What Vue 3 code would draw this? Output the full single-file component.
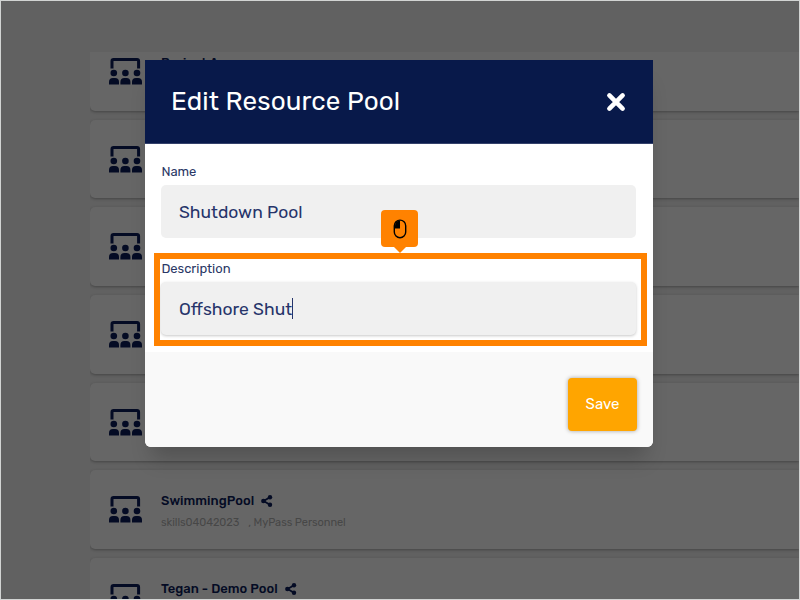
<script setup>
const pools = [
  { name: 'Project A', meta: [] },
  { name: '', meta: [] },
  { name: '', meta: [] },
  { name: '', meta: [] },
  { name: '', meta: [] },
  { name: 'SwimmingPool', shared: true, meta: ['skills04042023', ', MyPass Personnel'] },
  { name: 'Tegan - Demo Pool', shared: true, meta: [] },
]
</script>

<template>
  <div class="screen">
    <div class="list">
      <div v-for="(p, i) in pools" :key="i" class="card">
        <svg class="people" viewBox="0 0 33 27" width="33" height="27">
          <path d="M3 10.5V3.2Q3 1.6 4.6 1.6H28Q29.6 1.6 29.6 3.2V10.5" fill="none" stroke="currentColor" stroke-width="3" />
          <g fill="currentColor">
            <circle cx="4.8" cy="15" r="3.3" />
            <circle cx="16.4" cy="15" r="3.3" />
            <circle cx="28" cy="15" r="3.3" />
            <path d="M0 26.5V24Q0 20 4 20H6Q10 20 10 24V26.5ZM11.4 26.5V24Q11.4 20 15.4 20H17.4Q21.4 20 21.4 24V26.5ZM23 26.5V24Q23 20 27 20H29Q33 20 33 24V26.5Z" />
          </g>
        </svg>
        <div class="info">
          <div class="title">
            <span>{{ p.name }}</span>
            <svg v-if="p.shared" class="share" viewBox="0 0 12 12" width="12" height="12">
              <path d="M9 2.3L2.6 6L9 9.7" fill="none" stroke="currentColor" stroke-width="1.8" />
              <circle cx="9" cy="2.3" r="2.2" fill="currentColor" />
              <circle cx="2.4" cy="6" r="2.3" fill="currentColor" />
              <circle cx="9" cy="9.7" r="2.2" fill="currentColor" />
            </svg>
          </div>
          <div v-if="p.meta.length" class="meta">
            <span v-for="m in p.meta" :key="m">{{ m }}</span>
          </div>
        </div>
      </div>
    </div>

    <div class="modal">
      <header class="head">
        <h1>Edit Resource Pool</h1>
        <svg class="close" viewBox="0 0 20 20" width="20" height="20">
          <path d="M3.4 3.4L16.6 16.6M16.6 3.4L3.4 16.6" stroke="#fff" stroke-width="4.6" stroke-linecap="round" />
        </svg>
      </header>
      <div class="body">
        <label class="label">Name</label>
        <div class="field"><span>Shutdown Pool</span></div>
        <div class="second">
          <label class="label">Description</label>
          <div class="field focused"><span>Offshore Shut</span><i class="caret"></i></div>
          <div class="highlight">
            <div class="tip">
              <svg viewBox="0 0 14 20" width="14" height="20">
                <path d="M2 9.5V6.5Q2 2 7 1.5V9.5Z" fill="#000" />
                <rect x="1.3" y="1.1" width="11.4" height="17.6" rx="5.7" fill="none" stroke="#000" stroke-width="1.4" />
              </svg>
            </div>
          </div>
        </div>
      </div>
      <footer class="foot">
        <button class="save"><span>Save</span></button>
      </footer>
    </div>
  </div>
</template>

<style>
body {
  margin: 0;
}
</style>

<style scoped>
.screen {
  position: relative;
  box-sizing: border-box;
  width: 800px;
  height: 600px;
  overflow: hidden;
  border: 1px solid #d2d4d3;
  background: #616161;
  padding: 51px 0 0 89px;
  font-family: Rubik, Roboto, sans-serif;
}
.list {
  height: 547px;
  overflow: hidden;
}
.card {
  display: flex;
  box-sizing: border-box;
  height: 78.6px;
  margin-bottom: 9px;
  padding: 26px 0 0 19px;
  border-radius: 5px 0 0 5px;
  background: #666;
  box-shadow: 0 1px 3px rgba(0, 0, 0, 0.3);
  color: #040b24;
}
.card:first-child {
  margin-top: -19.8px;
}
.people {
  flex: none;
}
.info {
  margin-left: 19px;
}
.title {
  display: flex;
  align-items: center;
  height: 16px;
  margin-top: -2.9px;
  font-size: 13px;
  font-weight: 500;
  line-height: 16px;
  letter-spacing: 0.03px;
  white-space: nowrap;
}
.share {
  margin-left: 7px;
}
.meta {
  display: flex;
  gap: 9px;
  margin-top: 7px;
  font-size: 11px;
  line-height: 14px;
  letter-spacing: -0.06px;
  color: #474747;
}
.modal {
  position: absolute;
  left: 144px;
  top: 59px;
  width: 508px;
  height: 387px;
  display: flex;
  flex-direction: column;
  border-radius: 0 0 6px 6px;
  background: #fff;
  box-shadow: 0 18px 20px -7px rgba(0, 0, 0, 0.2);
}
.head {
  display: flex;
  align-items: center;
  justify-content: space-between;
  box-sizing: border-box;
  height: 84px;
  padding: 0 27px 0 26px;
  border-bottom: 1px solid #34416b;
  background: #08194a;
}
h1 {
  margin: 0;
  color: #fff;
  font-size: 26px;
  font-weight: 400;
  line-height: 32px;
  letter-spacing: 0.14px;
}
.body {
  box-sizing: border-box;
  height: 208px;
  padding: 20px 16.6px 0 16.4px;
}
.label {
  display: block;
  height: 16px;
  margin-bottom: 5px;
  color: #2a3765;
  font-size: 13px;
  line-height: 16px;
  letter-spacing: -0.02px;
}
.field {
  display: flex;
  align-items: center;
  box-sizing: border-box;
  height: 53px;
  padding-left: 17.6px;
  border-radius: 5px;
  background: #f0f0f0;
  color: #26346a;
  font-size: 17.5px;
}
.second {
  position: relative;
  margin-top: 23px;
}
.focused {
  margin-top: 5px;
  box-shadow: 0 1px 3px rgba(0, 0, 0, 0.22);
}
.caret {
  width: 1px;
  height: 21px;
  background: #26346a;
}
.highlight {
  position: absolute;
  box-sizing: border-box;
  left: -7.8px;
  top: -8px;
  width: 493px;
  height: 93px;
  border: 6px solid #ff8200;
}
.tip {
  position: absolute;
  left: 221.6px;
  top: -49px;
  display: flex;
  align-items: center;
  justify-content: center;
  width: 37px;
  height: 37px;
  border-radius: 4px;
  background: #ff8200;
}
.tip::after {
  content: '';
  position: absolute;
  left: 12.5px;
  top: 37px;
  border: 6px solid transparent;
  border-top-color: #ff8200;
  border-bottom: 0;
}
.foot {
  flex: 1;
  display: flex;
  justify-content: flex-end;
  align-items: flex-start;
  padding: 26px 16px 0 0;
  border-radius: 0 0 6px 6px;
  background: #f9f9f9;
}
.save {
  width: 69px;
  height: 53px;
  padding: 0 0 2px;
  border: 0;
  border-radius: 4px;
  background: #ffa500;
  box-shadow: 0 0 4px rgba(0, 0, 0, 0.35);
  color: #fff;
  font: 400 15px Rubik, Roboto, sans-serif;
}
</style>
